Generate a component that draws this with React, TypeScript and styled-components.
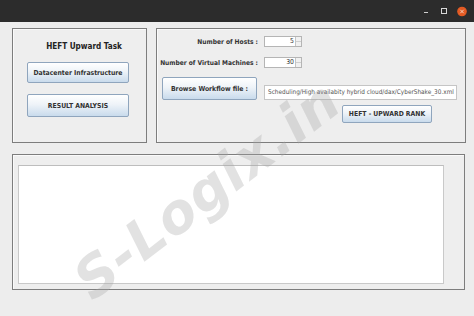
import React from "react";
import styled, { createGlobalStyle } from "styled-components";

const Global = createGlobalStyle`
  html, body { margin: 0; padding: 0; background: #ededed; }
  body { font-family: "DejaVu Sans Condensed", "DejaVu Sans", sans-serif; }
  * { box-sizing: border-box; }
`;

const Window = styled.div`
  position: relative;
  width: 474px;
  height: 316px;
  background: #ededed;
  overflow: hidden;
  display: flex;
  flex-direction: column;
`;

const TitleBar = styled.div`
  height: 22px;
  background: #2c2c2c;
  display: flex;
  align-items: center;
  justify-content: flex-end;
  gap: 8px;
  padding-right: 7px;
`;

const WinBtn = styled.div`
  width: 10px;
  height: 10px;
  display: flex;
  align-items: center;
  justify-content: center;
`;

const Content = styled.div`
  padding: 6px 8px 0 12px;
  display: flex;
  flex-direction: column;
  gap: 11px;
`;

const TopRow = styled.div`
  display: flex;
  gap: 9px;
  height: 115px;
`;

const Panel = styled.div<{ $w: number }>`
  width: ${(p) => p.$w}px;
  border: 1px solid #7d7d7d;
  box-shadow: inset 1px 1px 0 #fafafa;
  background: #eeeeee;
`;

const LeftPanel = styled(Panel)`
  display: flex;
  flex-direction: column;
  align-items: flex-start;
  padding: 11px 0 0 14px;
`;

const Heading = styled.div`
  width: 114px;
  text-align: center;
  font-weight: bold;
  font-size: 8.1px;
  color: #222;
  line-height: 12px;
  margin-bottom: 10px;
`;

const Button = styled.div<{ $w: number; $h: number }>`
  width: ${(p) => p.$w}px;
  height: ${(p) => p.$h}px;
  border: 1px solid #8fa5bd;
  border-radius: 2px;
  background: linear-gradient(#ffffff 0%, #eef3f8 45%, #c9dbec 100%);
  display: flex;
  align-items: center;
  justify-content: center;
  font-weight: bold;
  font-size: 6.8px;
  color: #333;
  white-space: nowrap;
`;

const StackGap = styled.div<{ $h: number }>`
  height: ${(p) => p.$h}px;
`;

const RightPanel = styled(Panel)`
  display: grid;
  grid-template-columns: 96px 193px;
  column-gap: 6px;
  align-content: start;
  padding: 7px 0 0 5px;
`;

const Label = styled.div`
  font-weight: bold;
  font-size: 6.6px;
  color: #333;
  text-align: right;
  white-space: nowrap;
  display: flex;
  align-items: center;
  justify-content: flex-end;
`;

const Spinner = styled.div`
  width: 38px;
  height: 11px;
  display: flex;
  border: 1px solid #b5b5b5;
  background: #fff;
`;

const SpinValue = styled.div`
  flex: 1;
  font-size: 6.8px;
  color: #333;
  text-align: right;
  line-height: 9px;
  padding-right: 1px;
`;

const SpinArrows = styled.div`
  width: 6px;
  display: flex;
  flex-direction: column;
  border-left: 1px solid #c5c5c5;
`;

const SpinArrow = styled.div`
  flex: 1;
  background: #f1f1f1;
  border-bottom: 1px solid #cfcfcf;
  &:last-child { border-bottom: none; }
`;

const RowGap = styled.div<{ $h: number }>`
  grid-column: 1 / span 2;
  height: ${(p) => p.$h}px;
`;

const FileField = styled.div`
  align-self: center;
  height: 15px;
  margin-top: 7px;
  border: 1px solid #c5c5c5;
  background: #fff;
  font-size: 6.4px;
  color: #555;
  line-height: 13px;
  padding-left: 3px;
  white-space: nowrap;
  overflow: hidden;
`;

const RankCell = styled.div`
  grid-column: 2;
  padding: 5px 0 0 78px;
`;

const BottomPanel = styled(Panel)`
  height: 136px;
  padding: 10px 0 0 5px;
`;

const TextArea = styled.div`
  width: 426px;
  height: 119px;
  background: #fff;
  border: 1px solid #c9c9c9;
  border-top-color: #bdbdbd;
`;

const Watermark = styled.div`
  position: absolute;
  left: 207px;
  top: 190px;
  transform: translate(-50%, -50%) rotate(-37.5deg);
  font-family: "DejaVu Sans", sans-serif;
  font-weight: bold;
  font-style: italic;
  font-size: 55px;
  color: rgba(165, 165, 165, 0.32);
  white-space: nowrap;
  pointer-events: none;
  letter-spacing: 1px;
`;

export default function App() {
  return (
    <>
      <Global />
      <Window>
        <TitleBar>
          <WinBtn>
            <svg width="10" height="10" viewBox="0 0 10 10">
              <rect x="3" y="6" width="4" height="1" fill="#cfcfcf" />
            </svg>
          </WinBtn>
          <WinBtn>
            <svg width="10" height="10" viewBox="0 0 10 10">
              <rect x="2.5" y="2.5" width="5" height="5" fill="none" stroke="#d8d8d8" strokeWidth="1" />
            </svg>
          </WinBtn>
          <WinBtn>
            <svg width="11" height="11" viewBox="0 0 11 11">
              <circle cx="5.5" cy="5.5" r="5.3" fill="#e35a23" />
              <path d="M3.6 3.6 L7.4 7.4 M7.4 3.6 L3.6 7.4" stroke="#f4d8c8" strokeWidth="1" />
            </svg>
          </WinBtn>
        </TitleBar>
        <Content>
          <TopRow>
            <LeftPanel $w={135}>
              <Heading>HEFT Upward Task</Heading>
              <Button $w={102} $h={21}>Datacenter Infrastructure</Button>
              <StackGap $h={11} />
              <Button $w={102} $h={23}>RESULT ANALYSIS</Button>
            </LeftPanel>
            <RightPanel $w={310}>
              <Label>Number of Hosts :</Label>
              <Spinner>
                <SpinValue>5</SpinValue>
                <SpinArrows>
                  <SpinArrow />
                  <SpinArrow />
                </SpinArrows>
              </Spinner>
              <RowGap $h={10} />
              <Label>Number of Virtual Machines :</Label>
              <Spinner>
                <SpinValue>30</SpinValue>
                <SpinArrows>
                  <SpinArrow />
                  <SpinArrow />
                </SpinArrows>
              </Spinner>
              <RowGap $h={9} />
              <Button $w={95} $h={23}>Browse Workflow file :</Button>
              <FileField>Scheduling/High availabity hybrid cloud/dax/CyberShake_30.xml</FileField>
              <RankCell>
                <Button $w={90} $h={18}>HEFT - UPWARD RANK</Button>
              </RankCell>
            </RightPanel>
          </TopRow>
          <BottomPanel $w={453}>
            <TextArea />
          </BottomPanel>
        </Content>
        <Watermark>S-Logix.in</Watermark>
      </Window>
    </>
  );
}
